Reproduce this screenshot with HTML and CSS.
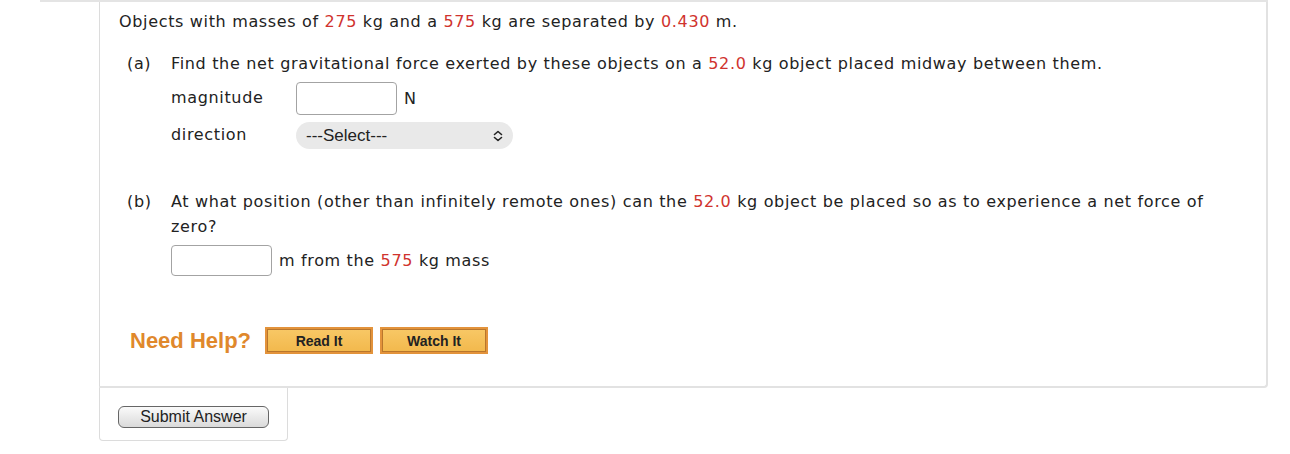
FILE: index.html
```html
<!DOCTYPE html>
<html lang="en">
  <head>
    <meta charset="UTF-8" />
    <meta name="viewport" content="width=device-width, initial-scale=1.0" />
    <title>Gravitation question</title>
    <link rel="stylesheet" href="styles.css">
  </head>
  <body>
    <div class="topline"></div>
    <div class="question">
      <p class="intro">
        Objects with masses of <span class="red">275</span> kg and a <span class="red">575</span> kg are separated by <span class="red">0.430</span> m.
      </p>

      <div class="part part-a">
        <span class="tag">(a)</span>
        <div class="body">
          <p>Find the net gravitational force exerted by these objects on a <span class="red">52.0</span> kg object placed midway between them.</p>
          <div class="answers">
            <div class="row">
              <span class="label">magnitude</span>
              <input class="blank" type="text">
              <span class="unit">N</span>
            </div>
            <div class="row row-select">
              <span class="label">direction</span>
              <div class="select">
                <span>---Select---</span>
                <svg width="10" height="12" viewBox="0 0 10 12">
                  <path d="M1.5 4.5 L5 1.5 L8.5 4.5 M1.5 7.5 L5 10.5 L8.5 7.5" fill="none" stroke="#222" stroke-width="1.6" stroke-linecap="round" stroke-linejoin="round"/>
                </svg>
              </div>
            </div>
          </div>
        </div>
      </div>

      <div class="part part-b">
        <span class="tag">(b)</span>
        <div class="body">
          <p><span>At what position (other than infinitely remote ones) can the</span> <span class="red">52.0</span> <span>kg object be placed so as to experience a net force of</span> <span>zero?</span></p>
          <div class="row">
            <input class="blank" type="text">
            <span class="unit">m from the <span class="red">575</span> kg mass</span>
          </div>
        </div>
      </div>

      <div class="help">
        <span class="need">Need Help?</span>
        <button class="helpbtn">Read It</button>
        <button class="helpbtn">Watch It</button>
      </div>
    </div>
    <div class="submit-box">
      <button class="submit">Submit Answer</button>
    </div>
  </body>
</html>
```

FILE: styles.css
```css
body {
  margin: 0;
  font-family: "DejaVu Sans", Verdana, sans-serif;
  font-size: 16px;
  line-height: 25px;
  letter-spacing: 0.66px;
  color: #222;
  background: #fff;
}
p {
  margin: 0;
}
.red {
  color: #d0332e;
}

.topline {
  margin-left: 40px;
  width: 1228px;
  height: 2px;
  background: #e4e4e4;
}

.question {
  margin-left: 99px;
  width: 1097px;
  padding: 7px 50px 32px 19px;
  border-left: 1px solid #dcdcdc;
  border-right: 2px solid #e2e2e2;
  border-bottom: 2px solid #e2e2e2;
  border-bottom-right-radius: 4px;
}

.part {
  display: flex;
  padding-left: 8px;
}
.part-a {
  margin-top: 17px;
}
.part-b {
  margin-top: 40px;
}
.tag {
  width: 44px;
  flex: none;
}

.answers {
  margin-top: 6px;
}
.row {
  display: flex;
  align-items: center;
}
.row-select {
  margin-top: 7px;
}
.part-b .row {
  margin-top: 6px;
}
.label {
  width: 125px;
  margin-top: -2px;
}
.blank {
  width: 101px;
  height: 33px;
  box-sizing: border-box;
  border: 1px solid #a3a3a3;
  border-radius: 4px;
  margin: 0;
  padding: 0;
}
.part-b .blank {
  height: 31px;
}
.unit {
  margin-left: 7px;
}
.select {
  width: 217px;
  height: 27px;
  box-sizing: border-box;
  background: #e9e9e9;
  border-radius: 14px;
  display: flex;
  align-items: center;
  justify-content: space-between;
  padding: 0 10px 0 10px;
  font-family: "Liberation Sans", Arial, sans-serif;
  font-size: 17px;
  letter-spacing: 0;
}

.help {
  display: flex;
  align-items: center;
  margin-top: 51px;
  padding-left: 11px;
  letter-spacing: 0;
}
.need {
  font-family: "Liberation Sans", Arial, sans-serif;
  font-weight: bold;
  font-size: 22px;
  color: #e0882c;
  margin-right: 14px;
}
.helpbtn {
  width: 108px;
  height: 27px;
  margin-right: 7px;
  border: 2px solid #e3933b;
  box-shadow: inset 0 0 0 1px #b9762c;
  background: linear-gradient(#f8c866, #f2b84c);
  font-family: "Liberation Sans", Arial, sans-serif;
  font-weight: bold;
  font-size: 14px;
  color: #222;
  padding: 0;
}

.submit-box {
  margin-left: 99px;
  width: 169px;
  padding: 18px 0 12px 18px;
  border-left: 1px solid #dcdcdc;
  border-right: 1px solid #dcdcdc;
  border-bottom: 1px solid #dcdcdc;
  border-bottom-left-radius: 4px;
  border-bottom-right-radius: 4px;
}
.submit {
  width: 151px;
  height: 22px;
  border: 1px solid #666;
  border-radius: 6px;
  background: linear-gradient(#fafafa, #dadada);
  font-family: "Liberation Sans", Arial, sans-serif;
  font-size: 16px;
  letter-spacing: 0;
  color: #222;
  padding: 0;
  display: block;
}
```
